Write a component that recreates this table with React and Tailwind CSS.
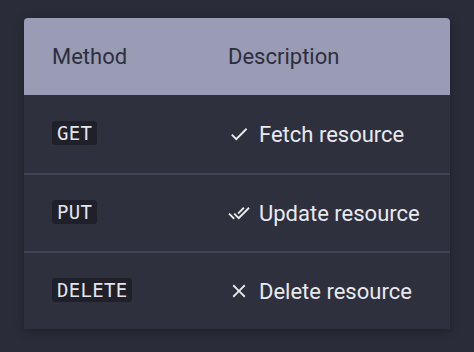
import React from "react";

const CheckIcon = () => (
  <svg viewBox="0 0 24 24" className="w-[22px] h-[22px]" fill="currentColor">
    <path d="M9 16.17L4.83 12l-1.42 1.41L9 19 21 7l-1.41-1.41z" />
  </svg>
);

const DoneAllIcon = () => (
  <svg viewBox="0 0 24 24" className="w-[22px] h-[22px]" fill="currentColor">
    <path d="M18 7l-1.41-1.41-6.34 6.34 1.41 1.41L18 7zm4.24-1.41L11.66 16.17 7.48 12l-1.41 1.41L11.66 19l12-12-1.42-1.41zM.41 13.41L6 19l1.41-1.41L1.83 12 .41 13.41z" />
  </svg>
);

const CloseIcon = () => (
  <svg viewBox="0 0 24 24" className="w-[22px] h-[22px]" fill="currentColor">
    <path d="M19 6.41L17.59 5 12 10.59 6.41 5 5 6.41 10.59 12 5 17.59 6.41 19 12 13.41 17.59 19 19 17.59 13.41 12z" />
  </svg>
);

const rows = [
  { method: "GET", icon: <CheckIcon />, text: "Fetch resource" },
  { method: "PUT", icon: <DoneAllIcon />, text: "Update resource" },
  { method: "DELETE", icon: <CloseIcon />, text: "Delete resource" },
];

export default function App() {
  return (
    <div className="w-[474px] h-[352px] bg-[#2a2c39] pt-[18px] px-[24px] font-['Roboto',sans-serif]">
      <div className="rounded-t-[4px] overflow-hidden bg-[#2e303e] shadow-[0_2px_10px_rgba(0,0,0,0.3)]">
        {/* header */}
        <div className="flex items-center h-[77px] bg-[#9a9cb5] text-[#2d2f3e] text-[22px]">
          <div className="w-[204px] pl-[28px]">Method</div>
          <div>Description</div>
        </div>
        {rows.map((row, i) => (
          <div
            key={row.method}
            className={`flex items-center h-[78px] ${i > 0 ? "border-t-2 border-[#414455]" : ""}`}
          >
            <div className="w-[204px] pl-[28px]">
              <span className="inline-block bg-[#1f2029] text-[#e4e4ea] rounded-[3px] px-[5px] h-[24px] leading-[24px] text-[19px] tracking-[0.3px] font-['DejaVu_Sans_Mono',monospace]">
                {row.method}
              </span>
            </div>
            <div className="flex items-center gap-[9px] text-[#e9e9ee] text-[22px]">
              {row.icon}
              <span>{row.text}</span>
            </div>
          </div>
        ))}
      </div>
    </div>
  );
}
